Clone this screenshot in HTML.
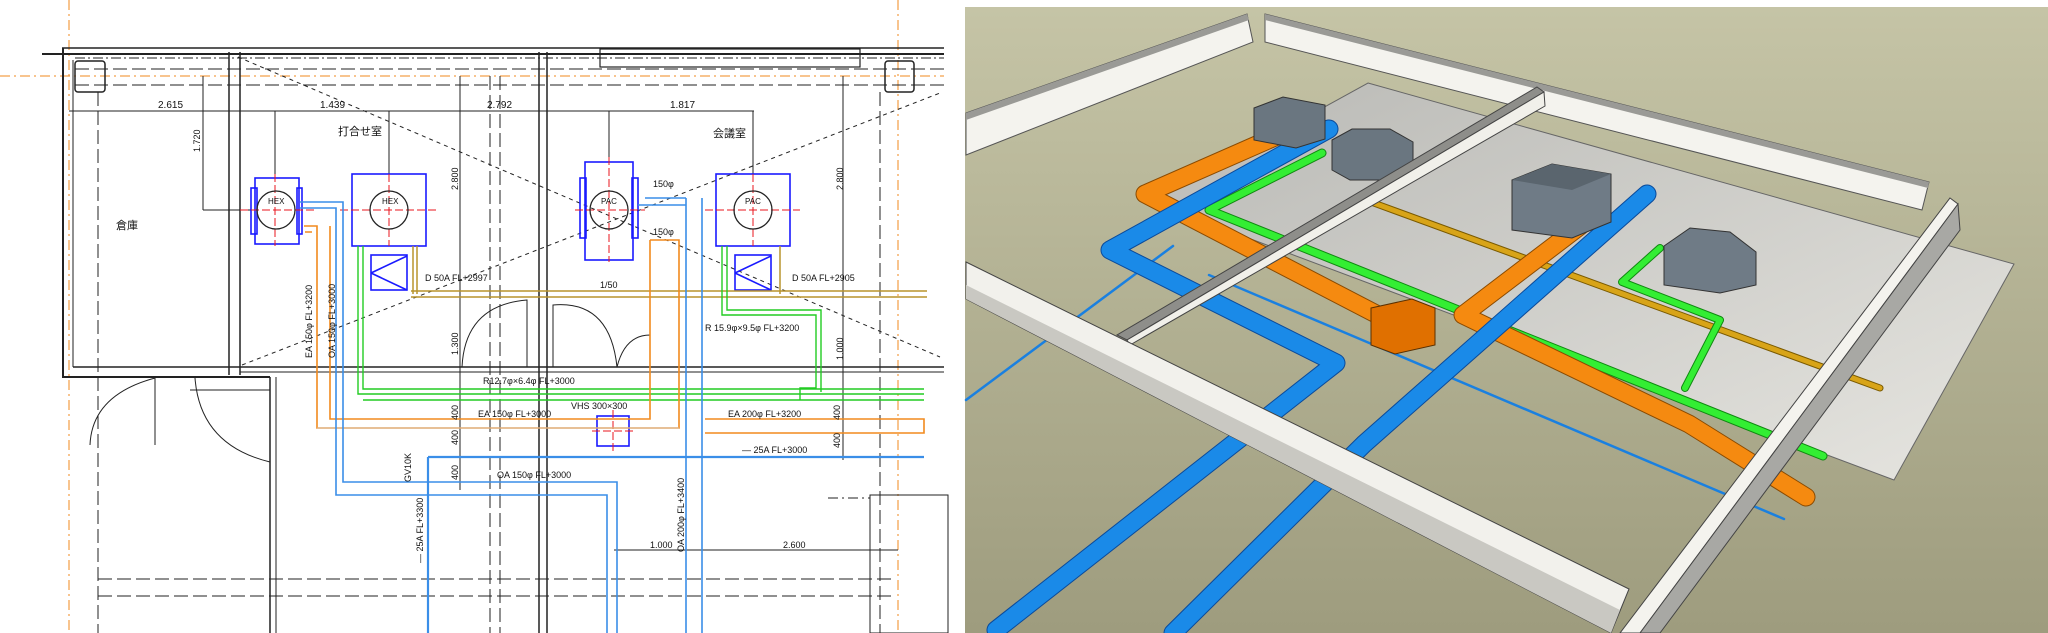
<!DOCTYPE html>
<html><head><meta charset="utf-8"><style>
html,body{margin:0;padding:0;background:#fff;width:2048px;height:633px;overflow:hidden}
svg{display:block}
text{font-family:"Liberation Sans","Noto Sans CJK JP",sans-serif;fill:#111}
</style></head><body>
<svg width="2048" height="633" viewBox="0 0 2048 633" xmlns="http://www.w3.org/2000/svg">
<defs>
<linearGradient id="bg" x1="0" y1="0" x2="0" y2="1"><stop offset="0" stop-color="#c5c4a6"/><stop offset="1" stop-color="#9e9c7e"/></linearGradient>
<linearGradient id="pl" x1="0" y1="0" x2="1" y2="1"><stop offset="0" stop-color="#b9b9b5"/><stop offset="1" stop-color="#e6e5e0"/></linearGradient>
</defs>
<rect width="2048" height="633" fill="#fff"/>
<!-- ===== LEFT CAD ===== -->
<g fill="none" stroke-width="1">
<g stroke="#f08a1c" stroke-dasharray="10 4 2 4"><line x1="69" y1="0" x2="69" y2="633"/><line x1="898" y1="0" x2="898" y2="633"/><line x1="0" y1="76" x2="944" y2="76"/></g>
<g stroke="#222">
<line x1="42" y1="54" x2="944" y2="54" stroke-width="2"/><line x1="62" y1="48" x2="944" y2="48" stroke-width="1.5"/>
<line x1="75" y1="58" x2="944" y2="58" stroke-dasharray="10 3 2 3"/>
<line x1="75" y1="69" x2="944" y2="69" stroke-dasharray="14 5"/><line x1="75" y1="85" x2="944" y2="85" stroke-dasharray="14 5"/>
<rect x="600" y="49" width="260" height="18" stroke-width="1.2"/>
<line x1="63" y1="48" x2="63" y2="378" stroke-width="2"/><line x1="73" y1="60" x2="73" y2="367"/>
<rect x="75" y="61" width="30" height="31" rx="3" stroke-width="1.5"/><rect x="885" y="61" width="29" height="31" rx="3" stroke-width="1.5"/>
<line x1="229" y1="52" x2="229" y2="375" stroke-width="1.5"/><line x1="240" y1="52" x2="240" y2="375" stroke-width="1.5"/>
<line x1="539" y1="52" x2="539" y2="633" stroke-width="1.5"/><line x1="547" y1="52" x2="547" y2="633" stroke-width="1.5"/>
<line x1="63" y1="377" x2="270" y2="377" stroke-width="2"/><line x1="73" y1="367" x2="944" y2="367" stroke-width="1.5"/><line x1="240" y1="372" x2="944" y2="372"/>
<line x1="270" y1="377" x2="270" y2="633" stroke-width="1.5"/><line x1="276" y1="377" x2="276" y2="633"/>
<line x1="190" y1="390" x2="270" y2="390"/>
<line x1="69" y1="111" x2="754" y2="111"/>
<line x1="203" y1="76" x2="203" y2="210"/><line x1="203" y1="210" x2="255" y2="210"/>
<line x1="460" y1="76" x2="460" y2="490"/><line x1="843" y1="76" x2="843" y2="460"/>
<line x1="275" y1="111" x2="275" y2="174"/><line x1="389" y1="111" x2="389" y2="174"/><line x1="609" y1="111" x2="609" y2="157"/><line x1="753" y1="111" x2="753" y2="174"/>
<line x1="614" y1="550" x2="898" y2="550"/>
<g stroke-dasharray="14 5"><line x1="98" y1="92" x2="98" y2="633"/><line x1="490" y1="76" x2="490" y2="633"/><line x1="500" y1="76" x2="500" y2="633"/><line x1="880" y1="92" x2="880" y2="633"/><line x1="98" y1="579" x2="892" y2="579"/><line x1="98" y1="596" x2="892" y2="596"/></g>
<g stroke-dasharray="4 4"><line x1="238" y1="57" x2="940" y2="357"/><line x1="242" y1="365" x2="940" y2="93"/></g>
<path d="M90 445 Q92 395 155 378 M155 378 L155 445 M195 378 Q200 445 270 462"/>
<path d="M462 367 Q465 305 527 300 L527 367 M553 367 L553 305 Q610 300 617 367 M617 367 Q625 335 650 335 L650 367"/>
<rect x="870" y="495" width="78" height="138"/><line x1="828" y1="498" x2="870" y2="498" stroke-dasharray="10 4 2 4"/>
</g>
<!-- units -->
<g stroke="#1a1aff" stroke-width="1.6">
<rect x="255" y="178" width="44" height="66"/><rect x="251" y="188" width="6" height="46"/><rect x="297" y="188" width="5" height="46"/>
<rect x="352" y="174" width="74" height="72"/><rect x="585" y="162" width="48" height="98"/><rect x="580" y="178" width="6" height="60"/><rect x="632" y="178" width="6" height="60"/>
<rect x="716" y="174" width="74" height="72"/>
<rect x="371" y="255" width="36" height="35"/><path d="M371 273 L407 256 M371 273 L407 290"/>
<rect x="735" y="255" width="36" height="35"/><path d="M735 273 L771 256 M735 273 L771 290"/>
<rect x="597" y="416" width="32" height="30"/>
</g>
<g stroke="#e8141c" stroke-dasharray="8 3"><line x1="240" y1="210" x2="315" y2="210"/><line x1="340" y1="210" x2="438" y2="210"/><line x1="575" y1="210" x2="645" y2="210"/><line x1="705" y1="210" x2="800" y2="210"/><line x1="275" y1="174" x2="275" y2="246"/><line x1="389" y1="174" x2="389" y2="246"/><line x1="609" y1="157" x2="609" y2="262"/><line x1="753" y1="174" x2="753" y2="246"/><line x1="613" y1="410" x2="613" y2="452"/><line x1="592" y1="431" x2="634" y2="431"/></g>
<g stroke="#222" stroke-width="1.3"><circle cx="276" cy="210" r="19"/><circle cx="389" cy="210" r="19"/><circle cx="609" cy="210" r="19"/><circle cx="753" cy="210" r="19"/></g>
<!-- drain gold -->
<g stroke="#b8942c" stroke-width="1.5"><line x1="411" y1="291" x2="927" y2="291"/><line x1="411" y1="297" x2="927" y2="297"/><line x1="413" y1="246" x2="413" y2="294"/><line x1="417" y1="246" x2="417" y2="294"/><line x1="780" y1="246" x2="780" y2="294"/></g>
<!-- green -->
<g stroke="#22cc22" stroke-width="1.4"><path d="M358 246 V394 H924 M363 246 V389 H924 M363 400 H924"/><path d="M722 246 V315 H816 V388 H800 V400 M727 246 V310 H821 V392"/></g>
<!-- orange -->
<g stroke="#f28a1e" stroke-width="1.6"><path d="M304 226 H317 V428 H679 V240 H650 M330 226 V419 H650 V240 M305 232 H312"/><path d="M705 419 H924 V433 H705"/><line x1="317" y1="428" x2="679" y2="428" stroke="#ccc" stroke-width="0.8"/></g>
<!-- blue -->
<g stroke="#3a8ee8" stroke-width="1.6"><path d="M300 202 H343 V482 H617 V633 M300 208 H336 V495 H607 V633"/><path d="M686 198 H645 M686 198 V633 M702 198 V633 M638 205 H686"/><path d="M428 457 H924 M428 457 V633" stroke-width="2.2"/></g>
<g font-size="10">
<text x="158" y="108">2.615</text><text x="320" y="108">1.439</text><text x="487" y="108">2.792</text><text x="670" y="108">1.817</text>
<text x="338" y="135" font-size="11">打合せ室</text><text x="713" y="137" font-size="11">会議室</text><text x="116" y="229" font-size="11">倉庫</text>
<text x="268" y="204" font-size="8">HEX</text><text x="382" y="204" font-size="8">HEX</text><text x="601" y="204" font-size="8">PAC</text><text x="745" y="204" font-size="8">PAC</text>
<text x="425" y="281" font-size="9">D 50A FL+2997</text><text x="792" y="281" font-size="9">D 50A FL+2905</text><text x="600" y="288" font-size="9">1/50</text>
<text x="653" y="187" font-size="9">150φ</text><text x="653" y="235" font-size="9">150φ</text>
<text x="705" y="331" font-size="9">R 15.9φ×9.5φ FL+3200</text><text x="483" y="384" font-size="9">R12.7φ×6.4φ FL+3000</text>
<text x="478" y="417" font-size="9">EA 150φ FL+3000</text><text x="571" y="409" font-size="9">VHS 300×300</text><text x="728" y="417" font-size="9">EA 200φ FL+3200</text>
<text x="742" y="453" font-size="9">— 25A FL+3000</text><text x="497" y="478" font-size="9">OA 150φ FL+3000</text>
<text x="650" y="548" font-size="9">1.000</text><text x="783" y="548" font-size="9">2.600</text>
<g font-size="9"><text transform="translate(200,152) rotate(-90)">1.720</text><text transform="translate(458,190) rotate(-90)">2.800</text><text transform="translate(843,190) rotate(-90)">2.800</text><text transform="translate(458,355) rotate(-90)">1.300</text><text transform="translate(843,360) rotate(-90)">1.000</text><text transform="translate(312,358) rotate(-90)">EA 150φ FL+3200</text><text transform="translate(335,358) rotate(-90)">OA 150φ FL+3000</text><text transform="translate(423,563) rotate(-90)">— 25A FL+3300</text><text transform="translate(684,552) rotate(-90)">OA 200φ FL+3400</text><text transform="translate(411,482) rotate(-90)">GV10K</text><text transform="translate(458,420) rotate(-90)">400</text><text transform="translate(458,445) rotate(-90)">400</text><text transform="translate(458,480) rotate(-90)">400</text><text transform="translate(840,420) rotate(-90)">400</text><text transform="translate(840,448) rotate(-90)">400</text></g>
</g>
</g>
<!-- ===== RIGHT 3D ===== -->
<rect x="965" y="7" width="1083" height="626" fill="url(#bg)"/>
<polygon points="1368,83 2014,264 1894,480 1152,202" fill="url(#pl)" stroke="#666" stroke-width="1"/>
<!-- beams back -->
<polygon points="966,113 1247,14 1253,42 966,155" fill="#f4f3ee" stroke="#555"/><polygon points="966,113 1247,14 1249,20 966,120" fill="#9a9a96"/>
<polygon points="1265,14 1929,182 1922,210 1265,42" fill="#f4f3ee" stroke="#555"/><polygon points="1265,14 1929,182 1928,188 1265,20" fill="#9a9a96"/>
<g fill="none" stroke-linecap="round" stroke-linejoin="round">
<path d="M966 400 L1173 246" stroke="#1a80e0" stroke-width="2.5"/>
<path d="M1209 275 L1784 519" stroke="#1a80e0" stroke-width="2.5"/>
<path d="M1371 202 L1880 388" stroke="#7a5a00" stroke-width="7"/><path d="M1371 202 L1880 388" stroke="#d8a418" stroke-width="5"/>
<path d="M1322 153 L1209 210 L1823 456" stroke="#118811" stroke-width="9"/><path d="M1322 153 L1209 210 L1823 456" stroke="#33ee33" stroke-width="7"/>
<path d="M1660 248 L1622 282 L1720 320 L1685 388" stroke="#118811" stroke-width="8"/><path d="M1660 248 L1622 282 L1720 320 L1685 388" stroke="#33ee33" stroke-width="6"/>
<path d="M1293 129 L1145 194 L1378 315 M1580 226 L1463 315 L1689 424 L1806 497" stroke="#8a4a00" stroke-width="19"/>
<path d="M1293 129 L1145 194 L1378 315 M1580 226 L1463 315 L1689 424 L1806 497" stroke="#f58a10" stroke-width="17"/>
<path d="M996 630 L1336 363 L1110 250 L1329 129 M1173 633 L1364 444 L1647 194" stroke="#0a4a9a" stroke-width="19"/>
<path d="M996 630 L1336 363 L1110 250 L1329 129 M1173 633 L1364 444 L1647 194" stroke="#1a8ae8" stroke-width="17"/>
</g>
<polygon points="1371,308 1412,299 1435,308 1435,345 1395,354 1371,345" fill="#e07000" stroke="#5a3000"/>
<polygon points="1254,108 1283,97 1325,105 1325,139 1296,148 1254,140" fill="#6a7680" stroke="#333"/>
<polygon points="1332,140 1352,129 1390,129 1413,142 1413,170 1390,180 1350,180 1332,170" fill="#6a7680" stroke="#333"/>
<polygon points="1512,180 1552,164 1611,174 1611,222 1572,238 1512,230" fill="#6f7b86" stroke="#333"/><polygon points="1512,180 1552,164 1611,174 1572,190" fill="#5a656e"/>
<polygon points="1664,246 1690,228 1730,232 1756,252 1756,285 1720,293 1664,285" fill="#6f7b86" stroke="#333"/>
<!-- middle beam -->
<polygon points="1537,87 1544,92 1127,340 1117,335" fill="#8e8e8a" stroke="#444"/><polygon points="1544,92 1545,106 1130,345 1127,340" fill="#f1f0ea" stroke="#444"/>
<!-- front beams -->
<polygon points="966,262 1629,589 1611,633 966,299" fill="#f2f1ec" stroke="#444"/><polygon points="966,285 1620,610 1611,633 966,299" fill="#c9c8c2"/>
<polygon points="1950,198 1958,204 1640,633 1620,633" fill="#f4f3ee" stroke="#444"/><polygon points="1958,204 1960,230 1660,633 1640,633" fill="#a8a8a4" stroke="#444"/>
</svg>
</body></html>
